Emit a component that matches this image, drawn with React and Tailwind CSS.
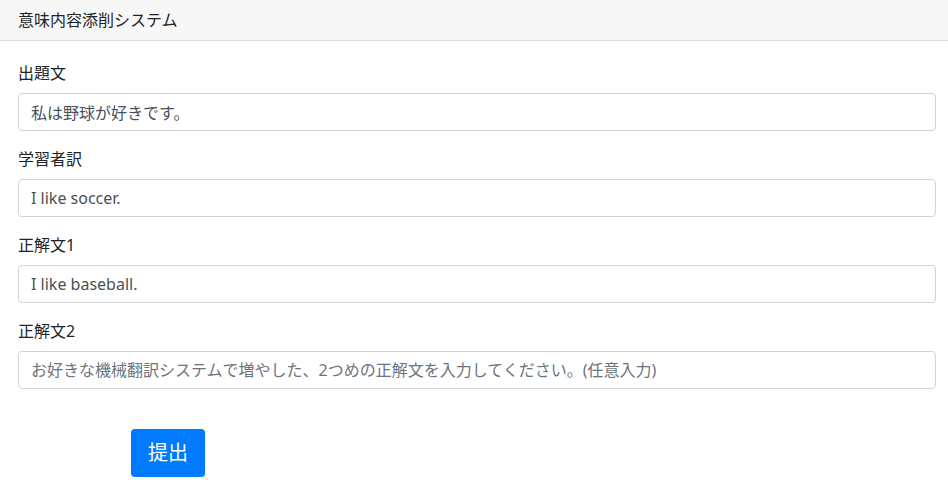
import React from 'react';

const font = {
  fontFamily: '"Segoe UI", "Noto Sans", "Noto Sans CJK JP", sans-serif',
};

const Field = ({ label, value, placeholder }) => {
  return (
    <div className="mb-4">
      <label className="block mb-2 text-[16px] leading-6 text-[#212529]">
        {label}
      </label>
      <input
        type="text"
        defaultValue={value}
        placeholder={placeholder}
        className="block w-full h-[38px] px-3 text-[16px] leading-6 text-[#495057] placeholder:text-[#6c757d] bg-white border border-[#ced4da] rounded-[4px] outline-none"
      />
    </div>
  );
};

const App = () => {
  return (
    <div style={font} className="min-h-[491px] bg-white">
      <div className="h-[41px] bg-[#f7f7f7] border-b border-[#dcdcdc] px-[18px] flex items-center">
        <span className="text-[16px] leading-6 text-[#212529]">
          意味内容添削システム
        </span>
      </div>
      <div className="pt-5 pl-[18px] pr-[12px]">
        <Field label="出題文" value="私は野球が好きです。" />
        <Field label="学習者訳" value="I like soccer." />
        <Field label="正解文1" value="I like baseball." />
        <Field
          label="正解文2"
          placeholder="お好きな機械翻訳システムで増やした、2つめの正解文を入力してください。(任意入力)"
        />
        <div className="pt-6 pl-[113px]">
          <button className="w-[74px] h-[48px] text-[20px] leading-[30px] text-white bg-[#007bff] rounded-[4px]">
            提出
          </button>
        </div>
      </div>
    </div>
  );
};

export default App;
